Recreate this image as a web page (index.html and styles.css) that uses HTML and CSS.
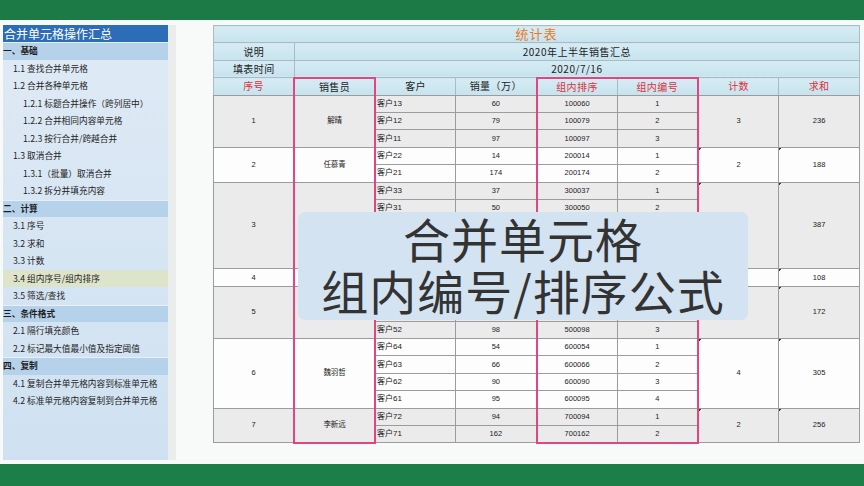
FILE: index.html
```html
<!DOCTYPE html>
<html lang="zh-CN">
<head>
<meta charset="utf-8">
<title>合并单元格操作汇总</title>
<link rel="stylesheet" href="styles.css">
</head>
<body>
<div class="topbar"></div>
<div class="main">
  <nav class="sidebar">
    <div class="side-title">合并单元格操作汇总</div>
    <div class="sec">一、基础</div>
    <div class="item">1.1 查找合并单元格</div>
    <div class="item">1.2 合并各种单元格</div>
    <div class="item sub">1.2.1 标题合并操作（跨列居中）</div>
    <div class="item sub">1.2.2 合并相同内容单元格</div>
    <div class="item sub">1.2.3 按行合并/跨越合并</div>
    <div class="item">1.3 取消合并</div>
    <div class="item sub">1.3.1（批量）取消合并</div>
    <div class="item sub">1.3.2 拆分并填充内容</div>
    <div class="sec">二、计算</div>
    <div class="item">3.1 序号</div>
    <div class="item">3.2 求和</div>
    <div class="item">3.3 计数</div>
    <div class="item active">3.4 组内序号/组内排序</div>
    <div class="item">3.5 筛选/查找</div>
    <div class="sec">三、条件格式</div>
    <div class="item">2.1 隔行填充颜色</div>
    <div class="item">2.2 标记最大值最小值及指定阈值</div>
    <div class="sec">四、复制</div>
    <div class="item">4.1 复制合并单元格内容到标准单元格</div>
    <div class="item">4.2 标准单元格内容复制到合并单元格</div>
  </nav>
  <section class="content">
    <table class="sheet">
      <tbody>
        <tr class="hd"><td colspan="8" class="title">统计表</td></tr>
        <tr class="hd"><td class="lbl">说明</td><td colspan="7">2020年上半年销售汇总</td></tr>
        <tr class="hd"><td class="lbl">填表时间</td><td colspan="7">2020/7/16</td></tr>
        <tr class="hd cols">
          <td class="red">序号</td><td class="pk-l pk-r pk-t">销售员</td><td>客户</td><td>销量（万）</td>
          <td class="red pk-l pk-t">组内排序</td><td class="red pk-r pk-t">组内编号</td><td class="red">计数</td><td class="red">求和</td>
        </tr>

        <tr class="g"><td rowspan="3">1</td><td rowspan="3" class="pk-l pk-r">解晴</td><td class="cu">客户13</td><td>60</td><td class="pk-l">100060</td><td class="pk-r">1</td><td rowspan="3">3</td><td rowspan="3">236</td></tr>
        <tr class="g"><td class="cu">客户12</td><td>79</td><td class="pk-l">100079</td><td class="pk-r">2</td></tr>
        <tr class="g"><td class="cu">客户11</td><td>97</td><td class="pk-l">100097</td><td class="pk-r">3</td></tr>

        <tr class="w"><td rowspan="2">2</td><td rowspan="2" class="pk-l pk-r">任慕青</td><td class="cu">客户22</td><td>14</td><td class="pk-l">200014</td><td class="pk-r">1</td><td rowspan="2" class="mk">2</td><td rowspan="2" class="mk">188</td></tr>
        <tr class="w"><td class="cu">客户21</td><td>174</td><td class="pk-l">200174</td><td class="pk-r">2</td></tr>

        <tr class="g"><td rowspan="5">3</td><td rowspan="5" class="pk-l pk-r"></td><td class="cu">客户33</td><td>37</td><td class="pk-l">300037</td><td class="pk-r">1</td><td rowspan="5" class="mk"></td><td rowspan="5" class="mk">387</td></tr>
        <tr class="g"><td class="cu">客户31</td><td>50</td><td class="pk-l">300050</td><td class="pk-r">2</td></tr>
        <tr class="g"><td class="cu"></td><td></td><td class="pk-l"></td><td class="pk-r"></td></tr>
        <tr class="g"><td class="cu"></td><td></td><td class="pk-l"></td><td class="pk-r"></td></tr>
        <tr class="g"><td class="cu"></td><td></td><td class="pk-l"></td><td class="pk-r"></td></tr>

        <tr class="w"><td>4</td><td class="pk-l pk-r"></td><td class="cu"></td><td></td><td class="pk-l"></td><td class="pk-r"></td><td class="mk"></td><td class="mk">108</td></tr>

        <tr class="g"><td rowspan="3">5</td><td rowspan="3" class="pk-l pk-r"></td><td class="cu"></td><td></td><td class="pk-l"></td><td class="pk-r"></td><td rowspan="3" class="mk"></td><td rowspan="3" class="mk">172</td></tr>
        <tr class="g"><td class="cu"></td><td></td><td class="pk-l"></td><td class="pk-r"></td></tr>
        <tr class="g"><td class="cu">客户52</td><td>98</td><td class="pk-l">500098</td><td class="pk-r">3</td></tr>

        <tr class="w"><td rowspan="4">6</td><td rowspan="4" class="pk-l pk-r">魏羽哲</td><td class="cu">客户64</td><td>54</td><td class="pk-l">600054</td><td class="pk-r">1</td><td rowspan="4" class="mk">4</td><td rowspan="4" class="mk">305</td></tr>
        <tr class="w"><td class="cu">客户63</td><td>66</td><td class="pk-l">600066</td><td class="pk-r">2</td></tr>
        <tr class="w"><td class="cu">客户62</td><td>90</td><td class="pk-l">600090</td><td class="pk-r">3</td></tr>
        <tr class="w"><td class="cu">客户61</td><td>95</td><td class="pk-l">600095</td><td class="pk-r">4</td></tr>

        <tr class="g"><td rowspan="2">7</td><td rowspan="2" class="pk-l pk-r pk-b">李新远</td><td class="cu">客户72</td><td>94</td><td class="pk-l">700094</td><td class="pk-r">1</td><td rowspan="2" class="mk">2</td><td rowspan="2" class="mk">256</td></tr>
        <tr class="g"><td class="cu">客户71</td><td>162</td><td class="pk-l pk-b">700162</td><td class="pk-r pk-b">2</td></tr>
      </tbody>
    </table>
    <div class="caption">合并单元格<br>组内编号/排序公式</div>
  </section>
</div>
<div class="bottombar"></div>
</body>
</html>
```
FILE: styles.css
```css
html, body {
  margin: 0;
  padding: 0;
}
body {
  width: 864px;
  height: 486px;
  overflow: hidden;
  background: #f8f9f9;
  font-family: "Noto Sans CJK SC", "Noto Sans", sans-serif;
  color: #222;
}
.topbar {
  height: 20px;
  background: #1b7a45;
}
.bottombar {
  height: 22px;
  background: #1b7f47;
}
.main {
  height: 444px;
  display: flex;
  align-items: flex-start;
}
.sidebar {
  margin: 5px 0 0 3px;
  width: 165px;
  height: 435px;
  border-right: 8px solid #ebecec;
  background: linear-gradient(#dfeaf5, #cfe1f1);
  font-size: 8.7px;
  color: #1e1e1e;
}
.side-title {
  height: 17px;
  line-height: 17px;
  background: #2d6cb6;
  color: #fff;
  font-size: 12px;
  padding-left: 1px;
}
.sec {
  height: 16.5px;
  line-height: 16.5px;
  border-top: 1px solid #e6eef7;
  background: #b6d2ea;
  font-weight: bold;
  padding-left: 0;
}
.item {
  height: 17.5px;
  line-height: 17.5px;
  padding-left: 10px;
  white-space: nowrap;
}
.item.sub {
  padding-left: 20px;
}
.item.active {
  background: #dde4c9;
}
.content {
  position: relative;
  margin-left: 37px;
  padding-top: 5px;
}
.sheet {
  width: 647px;
  table-layout: fixed;
  border-collapse: collapse;
  font-family: "Liberation Sans", "Noto Sans CJK SC", sans-serif;
  font-size: 7.5px;
}
.sheet tr {
  height: 17.4px;
}
.sheet td {
  border: 1px solid #9c9c9c;
  padding: 0;
  text-align: center;
  vertical-align: middle;
  line-height: 10px;
  overflow: hidden;
  white-space: nowrap;
}
.sheet .hd td {
  background: linear-gradient(#d6ecf4, #c7e3ee);
  border-color: #a9bcc4;
  font-family: "Noto Sans CJK SC", sans-serif;
  font-size: 10px;
  letter-spacing: 0.5px;
}
.sheet .hd td.title {
  color: #e7792a;
  font-size: 13px;
  letter-spacing: 1px;
}
.sheet .hd.cols td {
  border-bottom-color: #9c9c9c;
}
.sheet .red,
.sheet .hd td.red {
  color: #e0303a;
}
.sheet tr.g td {
  background: #ebebeb;
}
.sheet tr.w td {
  background: #fdfdfd;
}
.sheet td.cu {
  text-align: left;
  padding-left: 1px;
  font-size: 8px;
}
.sheet td.pk-l { border-left: 2px solid #e2457f; }
.sheet td.pk-r { border-right: 2px solid #e2457f; }
.sheet td.pk-t,
.sheet .hd td.pk-t { border-top: 2px solid #e2457f; }
.sheet td.pk-b { border-bottom: 2px solid #e2457f; }
.sheet .hd td.pk-l { border-left: 2px solid #e2457f; }
.sheet .hd td.pk-r { border-right: 2px solid #e2457f; }
.sheet tr.g td.mk {
  background: linear-gradient(135deg, #2f3f2f 0 2px, transparent 2px) top left / 5px 5px no-repeat, #ebebeb;
}
.sheet tr.w td.mk {
  background: linear-gradient(135deg, #2f3f2f 0 2px, transparent 2px) top left / 5px 5px no-repeat, #fdfdfd;
}
.caption {
  position: absolute;
  left: 85px;
  top: 192px;
  width: 450px;
  height: 108px;
  box-sizing: border-box;
  padding-top: 0;
  border-radius: 7px;
  background: #d3e3f1;
  color: #333;
  font-family: "Noto Sans CJK SC", sans-serif;
  font-size: 47px;
  line-height: 52px;
  text-align: center;
  letter-spacing: 1px;
}
```
